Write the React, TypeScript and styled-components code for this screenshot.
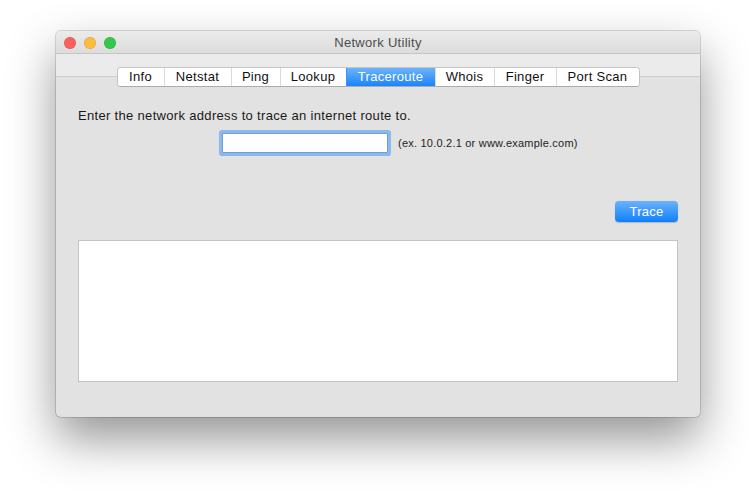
import styled, { createGlobalStyle } from 'styled-components'

const GlobalStyle = createGlobalStyle`
    html, body {
        margin: 0;
        padding: 0;
        background: #fff;
    }
    body {
        font-family: 'Liberation Sans', Arial, sans-serif;
        -webkit-font-smoothing: antialiased;
    }
`

interface ITab {
    label: string,
    width: number,
}

const tabs: ITab[] = [
    { label: 'Info', width: 46 },
    { label: 'Netstat', width: 67 },
    { label: 'Ping', width: 49 },
    { label: 'Lookup', width: 66 },
    { label: 'Traceroute', width: 89 },
    { label: 'Whois', width: 59 },
    { label: 'Finger', width: 62 },
    { label: 'Port Scan', width: 83 },
]

const lights = ['#fc605c', '#fdbc40', '#34c84a']

export default function App() {
    const active = 'Traceroute'

    return (
        <>
            <GlobalStyle />
            <Page>
                <Window>
                    <TitleBar>
                        <Lights>
                            {lights.map((c) => <Light key={c} $color={c} />)}
                        </Lights>
                        <Title>Network Utility</Title>
                    </TitleBar>
                    <TabHeader>
                        <Rule />
                        <Segmented>
                            {tabs.map((t) => (
                                <Segment key={t.label} $w={t.width} $active={t.label === active}>
                                    {t.label}
                                </Segment>
                            ))}
                        </Segmented>
                        <Rule />
                    </TabHeader>
                    <Content>
                        <Prompt>Enter the network address to trace an internet route to.</Prompt>
                        <InputRow>
                            <AddressInput type="text" />
                            <Hint>(ex. 10.0.2.1 or www.example.com)</Hint>
                        </InputRow>
                        <ButtonRow>
                            <TraceButton>Trace</TraceButton>
                        </ButtonRow>
                        <Output />
                    </Content>
                </Window>
            </Page>
        </>
    )
}

const Page = styled.div`
    width: 756px;
    height: 497px;
    padding: 31px 0 0 56px;
    box-sizing: border-box;
    overflow: hidden;
`

const Window = styled.div`
    width: 644px;
    height: 386px;
    background-color: #e2e2e2;
    border-radius: 5px;
    overflow: hidden;
    box-shadow: 0 0 0 1px rgba(0, 0, 0, 0.14), 0 22px 48px rgba(0, 0, 0, 0.42);
    display: flex;
    flex-direction: column;
`

const TitleBar = styled.div`
    position: relative;
    height: 22px;
    background: linear-gradient(#ebebeb, #dcdcdc);
    border-bottom: 1px solid #c6c6c6;
    display: flex;
    align-items: center;
    justify-content: center;
    flex-shrink: 0;
`

const Lights = styled.div`
    position: absolute;
    left: 8px;
    top: 6px;
    display: flex;
    gap: 8px;
`

const Light = styled.span<{ $color: string }>`
    width: 12px;
    height: 12px;
    border-radius: 50%;
    background-color: ${(p) => p.$color};
    box-shadow: inset 0 0 0 0.5px rgba(0, 0, 0, 0.15);
`

const Title = styled.div`
    font-size: 13px;
    letter-spacing: 0.3px;
    color: #4d4d4d;
    line-height: 22px;
    padding-top: 2px;
`

const TabHeader = styled.div`
    height: 33px;
    display: flex;
    align-items: flex-end;
    background: linear-gradient(#ebebeb 0, #ebebeb 23px, #e2e2e2 23px);
    flex-shrink: 0;
`

const Rule = styled.div`
    flex: 1;
    height: 1px;
    margin-bottom: 10px;
    background-color: #cfcfcf;
`

const Segmented = styled.div`
    display: flex;
    height: 20px;
    background-color: #fff;
    border: 1px solid #c3c3c3;
    border-bottom-color: #acacac;
    border-radius: 4px;
    overflow: hidden;
    box-sizing: border-box;
`

const Segment = styled.div<{ $w: number, $active: boolean }>`
    width: ${(p) => p.$w}px;
    box-sizing: border-box;
    font-size: 13px;
    letter-spacing: 0.3px;
    line-height: 18px;
    text-align: center;
    color: ${(p) => (p.$active ? '#fff' : '#111')};
    background: ${(p) => (p.$active ? 'linear-gradient(#6cb3fa, #1b84fb)' : '#fff')};
    border-left: 1px solid ${(p) => (p.$active ? '#3d93f8' : '#dadada')};

    &:first-child {
        border-left: none;
    }
`

const Content = styled.div`
    flex: 1;
    padding: 21px 22px 0 22px;
    display: flex;
    flex-direction: column;
`

const Prompt = styled.div`
    font-size: 13px;
    letter-spacing: 0.32px;
    line-height: 16px;
    color: #1a1a1a;
`

const InputRow = styled.div`
    display: flex;
    align-items: center;
    margin-top: 9px;
    padding-left: 144px;
`

const AddressInput = styled.input`
    width: 166px;
    height: 20px;
    box-sizing: border-box;
    border: 1px solid #6f9fd8;
    border-radius: 1px;
    background: #fff;
    outline: none;
    box-shadow: 0 0 0 3px #8bb9ec;
    padding: 0 3px;
    font-family: inherit;
    font-size: 13px;
`

const Hint = styled.span`
    margin-left: 10px;
    font-size: 11px;
    letter-spacing: 0.22px;
    color: #1e1e1e;
`

const ButtonRow = styled.div`
    display: flex;
    justify-content: flex-end;
    margin-top: 48px;
`

const TraceButton = styled.button`
    width: 63px;
    height: 21px;
    padding: 0;
    border: none;
    border-radius: 4px;
    background: linear-gradient(#6ab3fb, #0f7ffb);
    box-shadow: 0 0.5px 1px rgba(0, 0, 0, 0.2);
    color: #fff;
    font-family: inherit;
    font-size: 13px;
    letter-spacing: 0.3px;
    line-height: 21px;
`

const Output = styled.div`
    margin-top: 18px;
    height: 142px;
    box-sizing: border-box;
    background-color: #fff;
    border: 1px solid #c3c3c3;
`
